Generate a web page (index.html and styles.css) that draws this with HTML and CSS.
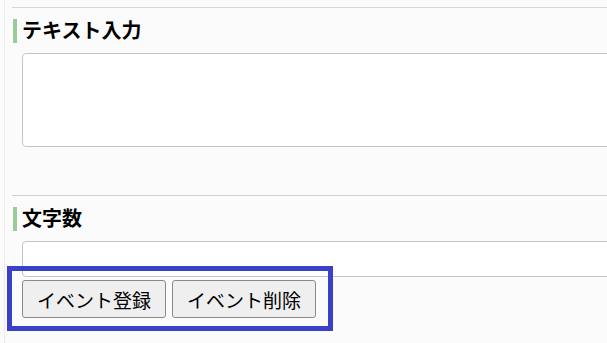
FILE: index.html
```html
<!DOCTYPE html>
<html lang="ja">
<head>
    <meta charset="UTF-8">
    <meta name="viewport" content="width=device-width, initial-scale=1.0">
    <title>テキスト入力</title>
    <link rel="stylesheet" href="styles.css">
</head>
<body>
    <div class="frame">
        <div class="panel">
            <h3 class="label">テキスト入力</h3>
            <textarea class="text-input"></textarea>

            <hr class="divider">

            <h3 class="label">文字数</h3>
            <input type="text" class="count-input">

            <div class="actions">
                <button class="btn">イベント登録</button>
                <button class="btn">イベント削除</button>
            </div>
        </div>
    </div>

    <!-- annotation box over the buttons -->
    <div class="highlight"></div>
</body>
</html>
```

FILE: styles.css
```css
/* === PAGE === */
body {
    margin: 0;
    background-color: #fbfbfb;
    font-family: "Noto Sans CJK JP", "Noto Sans", sans-serif;
    color: #000;
    overflow: hidden;
}

.frame {
    margin-left: 4px;
    padding: 7px 0 0 7px;
    border-left: 1px dotted #dddddd;
    height: 343px;
    box-sizing: border-box;
    overflow: hidden;
}

.panel {
    border-top: 1px solid #d6d6d6;
}

.label {
    margin: 11px 0 0 1px;
    padding: 0 0 2px 5px;
    border-left: 4px solid #99cc99;
    font-size: 20px;
    font-weight: bold;
    line-height: 22px;
}

.text-input,
.count-input {
    display: block;
    margin: 10px -20px 0 10px;
    width: calc(100% + 10px);
    box-sizing: border-box;
    border: 1px solid #c4c4c4;
    border-radius: 4px;
    background-color: #fff;
    resize: none;
}

.text-input {
    height: 94px;
}

.count-input {
    height: 36px;
}

.divider {
    margin: 48px 0 0 0;
    border: none;
    border-top: 1px solid #d0d0d0;
}

.actions {
    display: flex;
    gap: 6px;
    margin: 3px 0 0 10px;
}

.btn {
    width: 144px;
    height: 38px;
    padding: 0;
    font-family: inherit;
    font-size: 19px;
    color: #000;
    background-color: #efefef;
    border: 1px solid #8a8a8a;
    border-radius: 3px;
}

.highlight {
    position: absolute;
    left: 7px;
    top: 266px;
    width: 326px;
    height: 65px;
    box-sizing: border-box;
    border: 5px solid #3a40c8;
}
```
